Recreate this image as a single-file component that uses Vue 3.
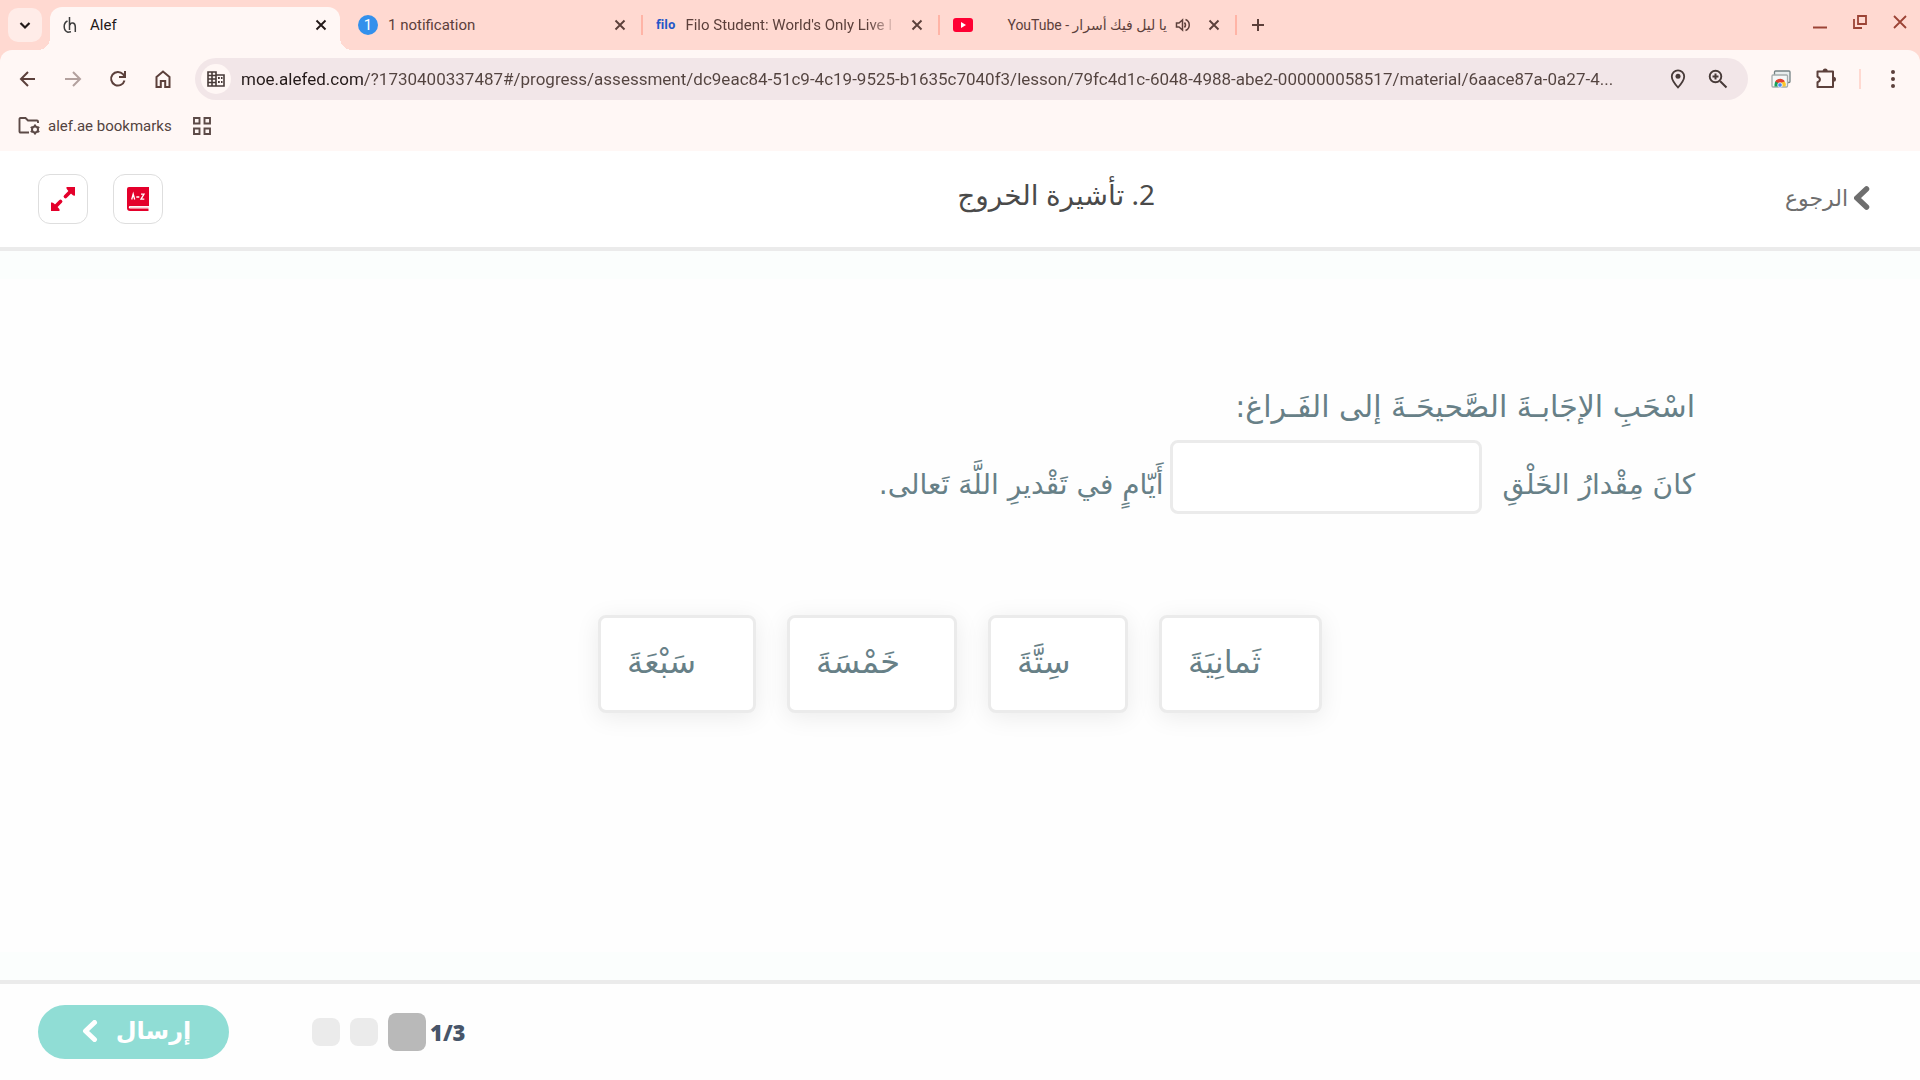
<template>
  <div class="browser">
    <div class="tab-strip">
      <button class="tab-search" aria-label="Search tabs">
        <svg width="14" height="12" viewBox="0 0 14 12"><path d="M2.500 4L7 8.500 11.500 4" fill="none" stroke="#231918" stroke-width="2.200" /></svg>
      </button>

      <div
        v-for="tab in tabs"
        :key="tab.id"
        class="tab"
        :class="{ active: tab.id === activeTab, [tab.id]: true }"
        @click="activeTab = tab.id"
      >
        <svg v-if="tab.id === 'alef'" class="favicon" width="14" height="20" viewBox="0 0 14 20">
          <path d="M6.500 2v13M4.500 6C0 8 0 15.500 5 17.300l3-.5M7 10C8 6.500 12.300 7.500 12.300 12v5" fill="none" stroke="#3d3d3d" stroke-width="1.500" />
        </svg>
        <span v-else-if="tab.id === 'notification'" class="favicon badge">1</span>
        <span v-else-if="tab.id === 'filo'" class="favicon filo-logo">filo</span>
        <svg v-else class="favicon" width="20" height="14" viewBox="0 0 20 14">
          <rect width="20" height="14" rx="3" fill="#ff0033" />
          <path d="M8 4l5 3-5 3z" fill="#fff" />
        </svg>
        <span class="tab-title">{{ tab.title }}</span>
        <svg v-if="tab.audio" class="audio" width="16" height="16" viewBox="0 0 16 16">
          <path d="M1.500 6v4H4l3.500 3V3L4 6z" fill="none" stroke="#5c403b" stroke-width="1.500" />
          <path d="M9.500 5.500q2 2.500 0 5M10.500 2.500c5 2 5 9 0 11" fill="none" stroke="#5c403b" stroke-width="1.500" />
        </svg>
        <button class="tab-close" aria-label="Close tab">
          <svg width="12" height="12" viewBox="0 0 12 12"><path d="M1.500 1.500l9 9M10.500 1.500l-9 9" stroke="currentColor" stroke-width="1.900" /></svg>
        </button>
      </div>

      <button class="new-tab" aria-label="New tab">
        <svg width="14" height="14" viewBox="0 0 14 14"><path d="M7 1v12M1 7h12" stroke="#5c403b" stroke-width="2" /></svg>
      </button>

      <div class="window-controls">
        <button aria-label="Minimize">
          <svg width="16" height="16" viewBox="0 0 16 16"><path d="M1 13.500h14" stroke="#9c4335" stroke-width="2" /></svg>
        </button>
        <button aria-label="Restore">
          <svg width="16" height="16" viewBox="0 0 16 16"><path d="M6 2h8v8H6zM2 5v9h8" fill="none" stroke="#9c4335" stroke-width="1.800" /></svg>
        </button>
        <button aria-label="Close window">
          <svg width="16" height="16" viewBox="0 0 16 16"><path d="M2 2l12 12M14 2L2 14" stroke="#9c4335" stroke-width="1.800" /></svg>
        </button>
      </div>
    </div>

    <div class="chrome">
      <div class="toolbar">
        <div class="nav">
          <button aria-label="Back">
            <svg width="20" height="20" viewBox="0 0 20 20"><path d="M17 10H3M10 3l-7 7 7 7" fill="none" stroke="#5c403b" stroke-width="2" /></svg>
          </button>
          <button aria-label="Forward" disabled>
            <svg width="20" height="20" viewBox="0 0 20 20"><path d="M2 10h14M10 3l7 7-7 7" fill="none" stroke="#b3a19e" stroke-width="2" /></svg>
          </button>
          <button aria-label="Reload">
            <svg width="20" height="20" viewBox="0 0 20 20"><path d="M16.500 11.500A6.800 6.800 0 1 1 15 5.200L16.500 7M17 2v6h-6" fill="none" stroke="#5c403b" stroke-width="2" /></svg>
          </button>
          <button aria-label="Home">
            <svg width="20" height="20" viewBox="0 0 20 20"><path d="M3.500 8L10 2.500 16.500 8v10h-4.300v-6H7.800v6H3.500z" fill="none" stroke="#5c403b" stroke-width="2" /></svg>
          </button>
        </div>

        <div class="omnibox">
          <button class="site-info" aria-label="View site information">
            <svg width="18" height="16" viewBox="0 0 18 16">
              <path d="M1 1h8v14H1zM9 4h8v11H9M1 4.500h8M1 8h8M1 11.500h8M5 1v14" fill="none" stroke="#473a38" stroke-width="1.600" />
              <path d="M11 7h1.800M14 7h1.500M11 11h1.800M14 11h1.500" stroke="#473a38" stroke-width="1.800" />
            </svg>
          </button>
          <input v-model="url" class="url" type="text" aria-label="Address" spellcheck="false" />
          <button aria-label="Location">
            <svg width="16" height="20" viewBox="0 0 16 20">
              <path d="M8 18.500C4 14 1.800 11 1.800 7.500a6.200 6.200 0 0 1 12.400 0C14.200 11 12 14 8 18.500z" fill="none" stroke="#473a38" stroke-width="1.800" />
              <circle cx="8" cy="7.300" r="2.500" fill="#473a38" />
            </svg>
          </button>
          <button aria-label="Zoom">
            <svg width="20" height="20" viewBox="0 0 20 20"><path d="M12.200 12.200L18.500 18.500M7.500 4.500v6M4.500 7.500h6" stroke="#473a38" stroke-width="2" /><circle cx="7.500" cy="7.500" r="5.800" fill="none" stroke="#473a38" stroke-width="1.900" /></svg>
          </button>
        </div>

        <div class="actions">
          <button aria-label="Media extension">
            <svg width="20" height="18" viewBox="0 0 20 18">
              <rect x="3.500" y="1" width="15.500" height="11.500" rx="1" fill="#e8eded" stroke="#758384" stroke-width="1.300" />
              <rect x="1" y="5" width="15.500" height="12" rx="1" fill="#f5f7f7" stroke="#a5adad" stroke-width="1.300" />
              <path d="M3.500 16.500v-2a5.500 5.500 0 0 1 2-4.200L9 14.500v2z" fill="#18a05a" />
              <path d="M4.300 11.500a5.700 5.700 0 0 1 9.600 0L9 14z" fill="#e2402f" />
              <path d="M13.900 11.500a6 6 0 0 1 .7 5H9V13z" fill="#fbc52c" />
              <circle cx="9" cy="15" r="2.300" fill="#4687f1" stroke="#fff" stroke-width=".800" />
            </svg>
          </button>
          <button aria-label="Extensions">
            <svg width="24" height="22" viewBox="0 0 24 22">
              <path d="M4.500 3.500H20v15.500H4.500v-4.800c3.200-1 3.200-4.500 0-5.500z" fill="none" stroke="#5c403b" stroke-width="2" stroke-linejoin="round" />
              <path d="M9.700 3a2.500 2.500 0 0 1 5 0zM20.500 8.700a2.500 2.500 0 0 1 0 5z" fill="#5c403b" />
            </svg>
          </button>
          <span class="divider"></span>
          <button aria-label="Menu">
            <svg width="20" height="20" viewBox="0 0 20 20" fill="#5c403b"><circle cx="10" cy="3" r="2" /><circle cx="10" cy="10" r="2" /><circle cx="10" cy="17" r="2" /></svg>
          </button>
        </div>
      </div>

      <div class="bookmarks">
        <button class="bookmark">
          <svg width="24" height="20" viewBox="0 0 24 20">
            <path d="M11 16.500H2.500a1 1 0 0 1-1-1V3a1 1 0 0 1 1-1h5l2.500 2.500h9a1 1 0 0 1 1 1V7" fill="none" stroke="#5c4a47" stroke-width="1.900" />
            <circle cx="17" cy="13.500" r="3" fill="none" stroke="#5c4a47" stroke-width="2" />
            <path d="M17 8.500v2M17 16.500v2M12.700 11l1.700 1M19.600 15l1.700 1M12.700 16l1.700-1M19.600 12l1.700-1" stroke="#5c4a47" stroke-width="2" />
          </svg>
          <span>alef.ae bookmarks</span>
        </button>
        <button class="bookmark" aria-label="Apps">
          <svg width="20" height="18" viewBox="0 0 20 18"><path d="M2 1h5.500v5.500H2zM12.500 1H18v5.500h-5.500zM2 11.500h5.500V17H2zM12.500 11.500H18V17h-5.500z" fill="none" stroke="#5c4a47" stroke-width="1.900" /></svg>
        </button>
      </div>
    </div>

    <div class="lesson" dir="rtl" lang="ar">
      <header class="lesson-header">
        <a class="back" href="#">
          <svg width="16" height="24" viewBox="0 0 16 24"><path d="M12.500 3L3 12l9.500 9" fill="none" stroke="#6e6e6e" stroke-width="5.500" stroke-linecap="round" /></svg>
          <span>الرجوع</span>
        </a>
        <h1>2. تأشيرة الخروج</h1>
        <div class="tools">
          <button class="tool" aria-label="القاموس">
            <svg width="22" height="24" viewBox="0 0 22 24">
              <path d="M2 0h20v19H3a1 1 0 0 0 0 2.500h18.500V24H3a3 3 0 0 1-3-3V2a2 2 0 0 1 2-2z" fill="#e4002b" />
              <path d="M3 20.300h18.500" stroke="#f9c5cf" stroke-width="1" />
              <path d="M4.700 12.500l1.500-5.500 1.500 5.500M9.300 10h3M14 7.200h3l-3 5h3.300" fill="none" stroke="#fff" stroke-width="1.300" />
            </svg>
          </button>
          <button class="tool" aria-label="ملء الشاشة">
            <svg width="24" height="24" viewBox="0 0 24 24">
              <path d="M14.500 9.500l5-5M9.500 14.500l-5 5" stroke="#e4002b" stroke-width="3.800" stroke-linecap="round" />
              <path d="M15.500 0H24v8.500q-2 .5-3-1L16.500 3q-1.500-1.500-1-3zM0 15.500V24h8.500q.5-2-1-3L3 16.500q-1.500-1.500-3-1z" fill="#e4002b" />
            </svg>
          </button>
        </div>
      </header>

      <main class="question">
        <p class="prompt">اسْحَبِ الإجَابـةَ الصَّحيحَـةَ إلى الفَـراغ:</p>
        <p class="sentence">
          <span class="words">كانَ مِقْدارُ الخَلْقِ</span>
          <span class="blank" @dragover.prevent @drop="placed = dragged">{{ placed }}</span>
          <span class="words">أَيّامٍ في تَقْديرِ اللَّهَ تَعالى.</span>
        </p>
        <div class="answers">
          <button
            v-for="answer in answers"
            :key="answer.id"
            class="answer"
            :class="answer.id"
            draggable="true"
            @dragstart="dragged = answer.text"
          >
            {{ answer.text }}
          </button>
        </div>
      </main>

      <footer class="lesson-footer" dir="ltr">
        <button class="submit">
          <svg width="16" height="22" viewBox="0 0 16 22"><path d="M12.500 2.500L3.500 11l9 8.500" fill="none" stroke="#fff" stroke-width="5" stroke-linecap="round" stroke-linejoin="round" /></svg>
          <span>إرسال</span>
        </button>
        <div class="progress">
          <span v-for="n in total" :key="n" class="step" :class="{ current: total - n + 1 === current }"></span>
          <span class="count">{{ current }}/{{ total }}</span>
        </div>
      </footer>
    </div>
  </div>
</template>

<script setup>
import { ref } from 'vue'

const tabs = [
  { id: 'alef', title: 'Alef' },
  { id: 'notification', title: '1 notification' },
  { id: 'filo', title: "Filo Student: World's Only Live I" },
  { id: 'youtube', title: 'YouTube - يا ليل فيك أسرار', audio: true }
]
const activeTab = ref('alef')

const url = ref('moe.alefed.com/?1730400337487#/progress/assessment/dc9eac84-51c9-4c19-9525-b1635c7040f3/lesson/79fc4d1c-6048-4988-abe2-000000058517/material/6aace87a-0a27-4...')

const answers = [
  { id: 'eight', text: 'ثَمانِيَةَ' },
  { id: 'six', text: 'سِتَّةَ' },
  { id: 'five', text: 'خَمْسَةَ' },
  { id: 'seven', text: 'سَبْعَةَ' }
]
const dragged = ref('')
const placed = ref('')

const current = ref(1)
const total = 3
</script>

<style>
body {
  background: #ffd9d1;
}
</style>

<style scoped>
.browser {
  display: flex;
  flex-direction: column;
  min-height: 100vh;
  background: #ffd9d1;
  font-family: Roboto, "DejaVu Sans", sans-serif;
}

.browser * {
  box-sizing: border-box;
}

button {
  display: flex;
  align-items: center;
  justify-content: center;
  padding: 0;
  border: 0;
  background: none;
  font: inherit;
  color: inherit;
  cursor: pointer;
}

svg {
  flex: none;
}

/* Tab strip */
.tab-strip {
  display: flex;
  height: 50px;
  padding: 7px 8px 0;
}

.tab-search {
  width: 34px;
  height: 34px;
  margin: 1px 8px 0 0;
  border-radius: 10px;
  background: #ffece8;
}

.tab {
  position: relative;
  display: flex;
  align-items: center;
  width: 297px;
  height: 36px;
  padding: 0 16px 0 13px;
  font-size: 15px;
  color: #5c403b;
}

.tab.active {
  width: 290px;
  height: 43px;
  padding: 0 12px 7px 13px;
  border-radius: 12px 12px 0 0;
  background: #fff7f5;
  color: #231918;
}

/* Curved feet of the active tab */
.tab.active::before,
.tab.active::after {
  content: '';
  position: absolute;
  bottom: 0;
  width: 12px;
  height: 12px;
}

.tab.active::before {
  left: -12px;
  background: radial-gradient(circle at 0 0, transparent 12px, #fff7f5 12px);
}

.tab.active::after {
  right: -12px;
  background: radial-gradient(circle at 100% 0, transparent 12px, #fff7f5 12px);
}

.tab.notification {
  width: 303px;
  padding-left: 18px;
}

.tab:not(.active)::after {
  content: '';
  position: absolute;
  right: 0;
  top: 8px;
  width: 2px;
  height: 20px;
  background: #ffb4a6;
}

.favicon {
  flex: none;
  margin-right: 13px;
}

.badge {
  width: 20px;
  height: 20px;
  margin-right: 10px;
  border-radius: 50%;
  background: #3390ec;
  color: #fff;
  line-height: 20px;
  text-align: center;
}

.filo-logo {
  margin-right: 10px;
  font: 700 12px/20px "Open Sans", sans-serif;
  color: #2356c8;
}

.tab-title {
  flex: 1;
  white-space: nowrap;
}

.filo .tab-title {
  mask-image: linear-gradient(to right, #000 184px, transparent 212px);
}

.youtube .tab-title {
  text-align: right;
  font-size: 14px;
}

.audio {
  margin: 0 16px 0 8px;
}

.tab-close {
  width: 14px;
  height: 14px;
}

.new-tab {
  width: 28px;
  height: 28px;
  margin: 4px 0 0 7px;
}

.window-controls {
  display: flex;
  gap: 24px;
  height: 30px;
  margin-left: auto;
  padding-right: 4px;
}

/* Toolbar */
.chrome {
  border-radius: 12px 12px 0 0;
  background: #fff7f5;
}

.toolbar {
  display: flex;
  align-items: center;
  padding: 8px 17px 0 18px;
}

.nav {
  display: flex;
  gap: 25px;
  margin-right: 22px;
}

.omnibox {
  flex: 1;
  display: flex;
  align-items: center;
  gap: 22px;
  height: 42px;
  padding: 0 20px 0 6px;
  border-radius: 21px;
  background: #f2e6e8;
}

.site-info {
  width: 30px;
  height: 30px;
  margin-right: -12px;
  border-radius: 50%;
  background: #fff7f5;
}

.url {
  flex: 1;
  min-width: 0;
  padding: 0;
  border: 0;
  outline: 0;
  /* host is darker than the rest of the address */
  background: linear-gradient(to right, #231918 122px, #53433f 122px);
  background-clip: text;
  -webkit-background-clip: text;
  color: transparent;
  font: 17px/24px Roboto, sans-serif;
}

.actions {
  display: flex;
  align-items: center;
  gap: 22px;
  margin-left: 23px;
}

.divider {
  width: 2px;
  height: 20px;
  background: #ffd9d1;
}

.bookmarks {
  display: flex;
  align-items: center;
  gap: 20px;
  height: 51px;
  padding: 0 18px;
  font-size: 15px;
  color: #53433f;
}

.bookmark {
  gap: 6px;
}

/* Lesson page */
.lesson {
  flex: 1;
  display: flex;
  flex-direction: column;
  background: #fefefe;
  font-family: "DejaVu Sans", sans-serif;
}

.lesson-header {
  display: grid;
  grid-template-columns: 7fr auto 9fr;
  align-items: center;
  height: 100px;
  padding: 0 50px 0 38px;
  border-bottom: 4px solid #ebebeb;
  background: #fff;
}

.back {
  display: flex;
  align-items: center;
  gap: 6px;
  padding-bottom: 2px;
  font-size: 22px;
  color: #6e6e6e;
  text-decoration: none;
}

h1 {
  margin: 0;
  padding-bottom: 10px;
  font: 400 28px/40px "Noto Sans", "DejaVu Sans", sans-serif;
  color: #4a4a4a;
}

.tools {
  display: flex;
  gap: 25px;
  justify-content: flex-end;
}

.tool {
  width: 50px;
  height: 50px;
  border: 1px solid #dedede;
  border-radius: 12px;
}

.question {
  flex: 1;
  padding: 108px 225px 0;
  border-top: 28px solid #fbfefd;
  border-bottom: 28px solid #fbfefd;
  font-size: 28px;
  line-height: 40px;
  color: #678087;
}

.prompt {
  margin: 0 0 13px;
  font-size: 30px;
}

.sentence {
  display: flex;
  align-items: center;
  margin: 0;
}

.words {
  padding-top: 16px;
}

.blank {
  width: 312px;
  height: 74px;
  margin: 0 21px 0 6px;
  border: 3px solid #ebebeb;
  border-radius: 8px;
  background: #fff;
  text-align: center;
  line-height: 68px;
}

.answers {
  display: flex;
  justify-content: center;
  gap: 31px;
  margin-top: 101px;
}

.answer {
  justify-content: flex-end;
  height: 98px;
  padding: 0 26px 4px;
  border: 3px solid #ebebeb;
  border-radius: 8px;
  background: #fff;
  box-shadow: 0 4px 24px rgba(0, 0, 0, 0.08);
  font-size: 32px;
}

.eight { width: 163px; }
.six { width: 140px; }
.five { width: 170px; }
.seven { width: 158px; }

.lesson-footer {
  display: flex;
  align-items: center;
  gap: 83px;
  height: 100px;
  padding: 0 38px;
  border-top: 4px solid #ebebeb;
}

.submit {
  gap: 18px;
  width: 191px;
  height: 54px;
  padding: 0 0 2px 6px;
  border-radius: 27px;
  background: #90ddd5;
  font-size: 24px;
  font-weight: 700;
  color: #fff;
}

.progress {
  display: flex;
  align-items: center;
  gap: 10px;
}

.step {
  width: 28px;
  height: 28px;
  border-radius: 8px;
  background: #ebebeb;
}

.step.current {
  width: 38px;
  height: 38px;
  background: #b9b9b9;
}

.count {
  margin-left: -6px;
  font: 800 22px/30px "Open Sans", sans-serif;
  color: #475569;
}
</style>
